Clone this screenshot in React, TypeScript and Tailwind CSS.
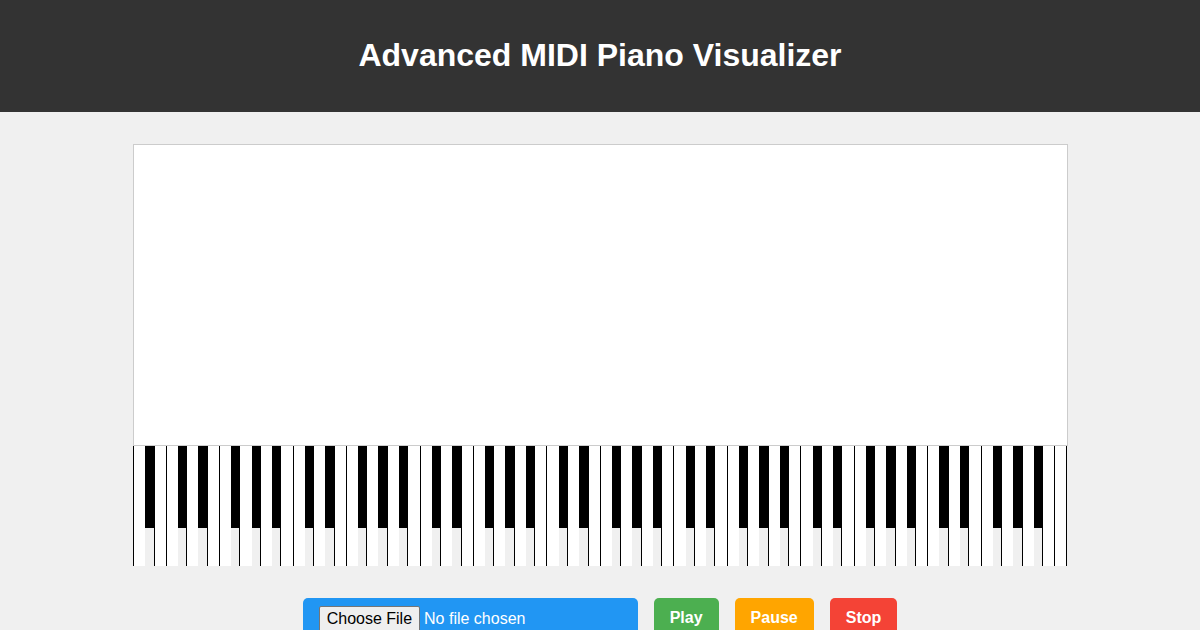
const FIRST_NOTE = 21;
const LAST_NOTE = 108;
const BLACK = [1, 3, 6, 8, 10];

const keys = Array.from({ length: LAST_NOTE - FIRST_NOTE + 1 }, (_, i) => {
  const note = FIRST_NOTE + i;
  return { note, black: BLACK.includes(note % 12) };
});

function Piano() {
  return (
    <div className="flex w-[934px] h-[120px]">
      {keys.map((k) =>
        k.black ? (
          <div key={k.note} className="w-[8.4px] h-[82px] shrink-0 bg-black" />
        ) : (
          <div
            key={k.note}
            className={`flex-1 basis-0 h-full bg-white border-l border-black ${
              k.note === LAST_NOTE ? "border-r" : ""
            }`}
          />
        )
      )}
    </div>
  );
}

export default function App() {
  return (
    <div className="min-h-[630px] bg-[#f0f0f0] font-['Liberation_Sans',Arial,sans-serif] leading-[normal] text-black">
      {/* Header */}
      <header className="bg-[#333333] py-4 text-center">
        <h1 className="my-[21.44px] text-[32px] font-bold leading-[37px] text-white">
          Advanced MIDI Piano Visualizer
        </h1>
      </header>

      <main className="flex flex-col items-center pt-8">
        {/* Visualizer */}
        <div className="w-[935px] h-[302px] border border-[#cccccc] bg-white" />
        <Piano />

        {/* Controls */}
        <div className="mt-8 flex items-start gap-4">
          <input
            type="file"
            accept=".mid,.midi"
            className="w-[335px] rounded-[5px] bg-[#2196F3] px-4 py-2 text-[16px] leading-[normal] text-white file:mr-1 file:rounded-[2px] file:border file:border-[#767676] file:bg-[#efefef] file:px-[7px] file:py-[3px] file:text-black"
          />
          <button className="rounded-[5px] bg-[#4CAF50] px-4 py-[11px] text-[16px] font-bold leading-[normal] text-white">
            Play
          </button>
          <button className="rounded-[5px] bg-[#FFA500] px-4 py-[11px] text-[16px] font-bold leading-[normal] text-white">
            Pause
          </button>
          <button className="rounded-[5px] bg-[#F44336] px-4 py-[11px] text-[16px] font-bold leading-[normal] text-white">
            Stop
          </button>
        </div>
      </main>
    </div>
  );
}
